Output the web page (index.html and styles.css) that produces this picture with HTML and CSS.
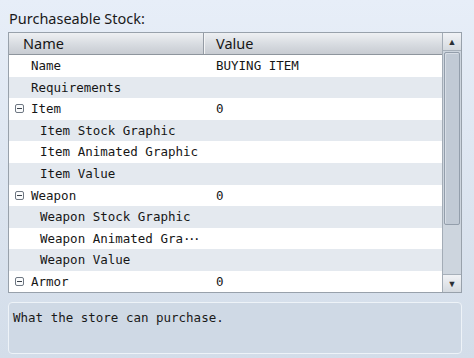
FILE: index.html
```html
<!DOCTYPE html>
<html lang="en">
<head>
  <meta charset="UTF-8" />
  <title>Purchaseable Stock</title>
  <link rel="stylesheet" href="styles.css">
</head>
<body>
  <div class="caption">Purchaseable Stock:</div>

  <!-- property grid -->
  <div class="grid-frame">
    <div class="grid">
      <div class="grid-head">
        <div class="head-cell">Name</div>
        <div class="head-cell head-value">Value</div>
      </div>
      <div class="row"><div class="cell-name lvl1">Name</div><div class="cell-value">BUYING ITEM</div></div>
      <div class="row"><div class="cell-name lvl1">Requirements</div><div class="cell-value"></div></div>
      <div class="row"><div class="cell-name group"><span class="toggle"></span>Item</div><div class="cell-value">0</div></div>
      <div class="row"><div class="cell-name lvl2">Item Stock Graphic</div><div class="cell-value"></div></div>
      <div class="row"><div class="cell-name lvl2">Item Animated Graphic</div><div class="cell-value"></div></div>
      <div class="row"><div class="cell-name lvl2">Item Value</div><div class="cell-value"></div></div>
      <div class="row"><div class="cell-name group"><span class="toggle"></span>Weapon</div><div class="cell-value">0</div></div>
      <div class="row"><div class="cell-name lvl2">Weapon Stock Graphic</div><div class="cell-value"></div></div>
      <div class="row"><div class="cell-name lvl2">Weapon Animated Gra<span class="dots">&middot;&middot;&middot;</span></div><div class="cell-value"></div></div>
      <div class="row"><div class="cell-name lvl2">Weapon Value</div><div class="cell-value"></div></div>
      <div class="row"><div class="cell-name group"><span class="toggle"></span>Armor</div><div class="cell-value">0</div></div>
    </div>

    <div class="scrollbar">
      <div class="sb-btn">&#9650;</div>
      <div class="sb-track"><div class="sb-thumb"></div></div>
      <div class="sb-btn">&#9660;</div>
    </div>
  </div>

  <!-- help text -->
  <div class="help">What the store can purchase.</div>
</body>
</html>
```

FILE: styles.css
```css
body {
  margin: 0;
  width: 474px;
  height: 358px;
  padding: 0 12px 0 8px;
  box-sizing: border-box;
  background: linear-gradient(#e7eef8, #d3dde9);
  font-family: "Noto Sans", sans-serif;
  color: #1a1a1a;
  display: flex;
  flex-direction: column;
}

.caption {
  font-size: 14.5px;
  height: 32px;
  line-height: 20px;
  padding-top: 8px;
  box-sizing: border-box;
  padding-left: 1px;
}

.grid-frame {
  display: flex;
  border: 1px solid #98a1ab;
  background: #fff;
  height: 261px;
  box-sizing: border-box;
}

.grid {
  flex: 1;
  font-family: "DejaVu Sans Mono", monospace;
  font-size: 12.5px;
  color: #161616;
}

.grid-head {
  display: grid;
  grid-template-columns: 194px 1fr;
  height: 21px;
  background: linear-gradient(#eef0f3, #d7dbe0 55%, #c8ccd2);
  border-bottom: 1px solid #8e959d;
  font-family: "Noto Sans", sans-serif;
  font-size: 14.5px;
}

.head-cell {
  line-height: 21px;
  padding-left: 14px;
}

.head-value {
  border-left: 1px solid #949ba4;
  box-shadow: inset 1px 0 0 #f3f4f6;
  padding-left: 12px;
}

.row {
  display: grid;
  grid-template-columns: 194px 1fr;
  height: 21.6px;
  line-height: 21.6px;
}

.row:nth-child(odd) {
  background: #e4e9ef;
}

.cell-name {
  white-space: nowrap;
}

.dots {
  letter-spacing: -2.5px;
}

.lvl1 {
  padding-left: 22px;
}

.lvl2 {
  padding-left: 31px;
}

.group {
  padding-left: 6px;
  display: flex;
  align-items: center;
}

.toggle {
  width: 7px;
  height: 7px;
  border: 1px solid #6e7782;
  border-radius: 2px;
  margin-right: 7px;
  position: relative;
  background: #fafbfc;
}

.toggle::after {
  content: "";
  position: absolute;
  left: 1px;
  right: 1px;
  top: 3px;
  height: 1px;
  background: #3c434b;
}

.cell-value {
  padding-left: 13px;
  white-space: nowrap;
}

.scrollbar {
  width: 18px;
  display: flex;
  flex-direction: column;
  background: #cdd5de;
  border-left: 1px solid #a3acb6;
}

.sb-btn {
  height: 17px;
  background: linear-gradient(#f1f3f6, #d5dae0);
  border-bottom: 1px solid #a7b0ba;
  font-size: 9px;
  line-height: 17px;
  text-align: center;
  color: #2a2f35;
}

.sb-btn:last-child {
  border-bottom: none;
  border-top: 1px solid #a7b0ba;
}

.sb-track {
  flex: 1;
  padding: 1px;
}

.sb-thumb {
  height: 171px;
  background: #c1cad5;
  border: 1px solid #939eab;
  border-radius: 2px;
  box-shadow: inset 1px 1px 0 #d8dee6;
}

.help {
  margin-top: 9px;
  height: 52px;
  border: 1px solid #eef3f8;
  border-radius: 4px;
  background: #cfd9e5;
  box-sizing: border-box;
  font-family: "DejaVu Sans Mono", monospace;
  font-size: 12.5px;
  padding: 7px 4px;
}
```
